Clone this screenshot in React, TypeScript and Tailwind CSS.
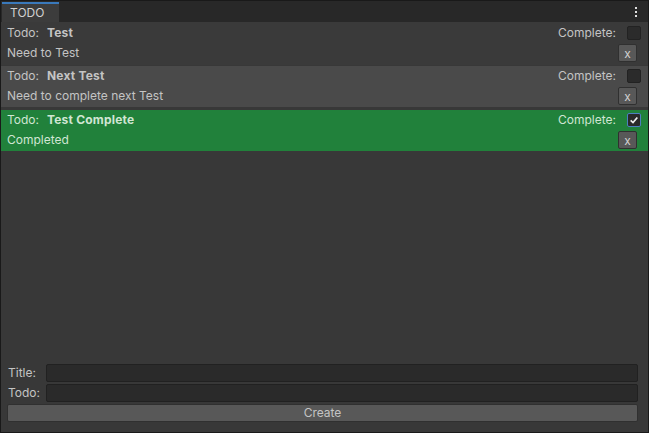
import { useState } from 'react';

interface Todo {
  id: number;
  title: string;
  text: string;
  done: boolean;
}

const initialTodos: Todo[] = [
  { id: 1, title: 'Test', text: 'Need to Test', done: false },
  { id: 2, title: 'Next Test', text: 'Need to complete next Test', done: false },
  { id: 3, title: 'Test Complete', text: 'Completed', done: true },
];

function Checkbox({ checked, onChange }: { checked: boolean; onChange: () => void }) {
  return (
    <button
      type="button"
      onClick={onChange}
      className={`w-[14px] h-[14px] rounded-[2px] flex items-center justify-center ${
        checked ? 'bg-[#2a2a2a] border border-[#4c7fc0]' : 'bg-[#2b2b2b] border border-[#222]'
      }`}
    >
      {checked && (
        <svg viewBox="0 0 12 12" className="w-[10px] h-[10px]">
          <path d="M2 6.5 L4.8 9 L10 3" fill="none" stroke="#f0f0f0" strokeWidth="2" />
        </svg>
      )}
    </button>
  );
}

export default function App() {
  const [todos, setTodos] = useState<Todo[]>(initialTodos);
  const [title, setTitle] = useState('');
  const [text, setText] = useState('');

  const rowBg = (t: Todo, i: number) => {
    if (t.done) return 'bg-[#21813b] text-[#d0e6d3]';
    return i % 2 === 0 ? 'bg-[#3a3a3a] text-[#c4c4c4]' : 'bg-[#4a4a4a] text-[#c4c4c4]';
  };

  return (
    <div
      className="w-[649px] h-[433px] bg-[#191919] p-[1px] flex flex-col text-[12px] text-[#c4c4c4]"
      style={{ fontFamily: 'Inter, "Liberation Sans", sans-serif' }}
    >
      {/* Tab bar */}
      <div className="h-[21px] bg-[#282828] flex items-end justify-between">
        <div className="h-[20px] w-[57px] ml-[1px] bg-[#3c3c3c] border-t-2 border-[#3a79bb] flex items-center pl-[8px] text-[#d2d2d2]">
          TODO
        </div>
        <div className="h-[20px] w-[12px] mr-[6px] flex flex-col items-center justify-center gap-[2px] self-center">
          <span className="w-[2px] h-[2px] bg-[#e0e0e0]" />
          <span className="w-[2px] h-[2px] bg-[#e0e0e0]" />
          <span className="w-[2px] h-[2px] bg-[#e0e0e0]" />
        </div>
      </div>

      <div className="flex-1 bg-[#383838] flex flex-col">
        {/* Todo list */}
        <div className="flex flex-col">
          {todos.map((t, i) => (
            <div
              key={t.id}
              className={`${rowBg(t, i)} ${i === 0 ? 'h-[43px] pt-[1px]' : 'h-[41px]'} ${
                i === 1 ? 'mt-[1px] mb-[3px]' : ''
              } flex flex-col pl-[6px]`}
            >
              <div className="h-[19px] flex items-center justify-between pr-[7px]">
                <div className="flex items-center">
                  <span className="w-[40px]">Todo:</span>
                  <span className="font-bold tracking-[0.2px]">{t.title}</span>
                </div>
                <div className="flex items-center">
                  <span className="mr-[11px]">Complete:</span>
                  <Checkbox
                    checked={t.done}
                    onChange={() =>
                      setTodos(todos.map(x => (x.id === t.id ? { ...x, done: !x.done } : x)))
                    }
                  />
                </div>
              </div>
              <div className="h-[21px] flex items-center justify-between pr-[11px]">
                <span>{t.text}</span>
                <button
                  type="button"
                  onClick={() => setTodos(todos.filter(x => x.id !== t.id))}
                  className="w-[19px] h-[18px] bg-[#585858] border border-[#303030] rounded-[2px] text-[#d2d2d2] leading-none flex items-center justify-center pt-[2px]"
                >
                  x
                </button>
              </div>
            </div>
          ))}
        </div>

        <div className="flex-1" />

        {/* Create form */}
        <div className="flex flex-col gap-[2px] pl-[6px] pr-[10px] pb-[10px]">
          <div className="flex items-center h-[18px]">
            <span className="w-[39px] pl-[1px]">Title:</span>
            <input
              value={title}
              onChange={e => setTitle(e.target.value)}
              className="flex-1 h-[18px] bg-[#2a2a2a] border border-[#212121] rounded-[2px] px-1 text-[#d2d2d2] outline-none"
            />
          </div>
          <div className="flex items-center h-[18px]">
            <span className="w-[39px] pl-[1px]">Todo:</span>
            <input
              value={text}
              onChange={e => setText(e.target.value)}
              className="flex-1 h-[18px] bg-[#2a2a2a] border border-[#212121] rounded-[2px] px-1 text-[#d2d2d2] outline-none"
            />
          </div>
          <button
            type="button"
            onClick={() => {
              if (!title) return;
              setTodos([...todos, { id: Date.now(), title, text, done: false }]);
              setTitle('');
              setText('');
            }}
            className="h-[18px] bg-[#585858] border border-[#303030] rounded-[2px] text-[#c4c4c4] flex items-center justify-center"
          >
            Create
          </button>
        </div>
      </div>
    </div>
  );
}
